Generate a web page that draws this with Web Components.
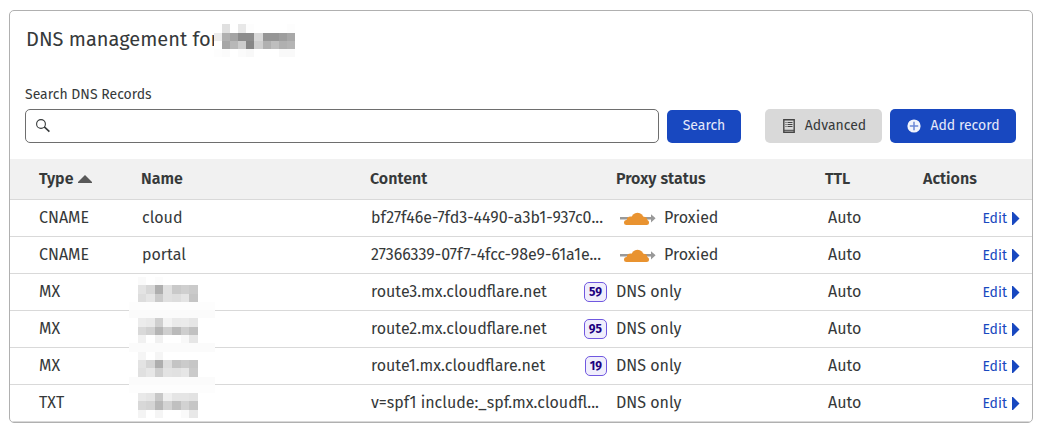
<!DOCTYPE html>
<html lang="en">
<head>
<meta charset="utf-8">
<meta name="viewport" content="width=device-width, initial-scale=1">
<title>DNS management</title>
<style>
  body {
    margin: 0;
    padding: 10px 14px 16px 9px;
    background: #fff;
    color: #36393a;
    font: 16px/20px "Fira Sans", Roboto, "Noto Sans", sans-serif;
  }
</style>
</head>
<body>
<dns-panel>
  <span slot="title">DNS management for</span>
  <pixel-mosaic slot="domain" kind="title"></pixel-mosaic>
  <dns-toolbar slot="toolbar"></dns-toolbar>
  <dns-table></dns-table>
</dns-panel>

<script>
class DnsPanel extends HTMLElement {
  constructor() {
    super();
    this.attachShadow({ mode: 'open' });
  }

  static get styles() {
    return /* css */ `
      :host {
        display: block;
        border: 1px solid #b0b0b0;
        border-radius: 5px;
        overflow: hidden;
      }

      header {
        display: flex;
        align-items: flex-start;
        height: 33px;
        padding: 13px 16px 0;
      }

      h1 {
        margin: 0;
        width: 188px;
        font-size: 20px;
        line-height: 30px;
        font-weight: 400;
        white-space: nowrap;
      }
    `;
  }

  connectedCallback() {
    this.shadowRoot.innerHTML = /* html */ `
    <style>${DnsPanel.styles}</style>
    <header>
      <h1><slot name="title"></slot></h1>
      <slot name="domain"></slot>
    </header>
    <slot name="toolbar"></slot>
    <slot></slot>`;
  }
}

// Grey blocks that stand in for the hidden names
class PixelMosaic extends HTMLElement {
  constructor() {
    super();
    this.attachShadow({ mode: 'open' });
  }

  static get kinds() {
    return {
      title: {
        width: 81,
        height: 33,
        xs: [0, 8, 16, 24, 32, 40, 49, 57, 65, 73, 81],
        bands: [],
        rows: [
          [0, 9, 'ff e0 ff e8 fd ff ff ff ff fd'],
          [9, 8, 'ec b0 a4 8c 8c d8 96 96 9e a8'],
          [17, 8, 'ff a6 b8 cc 86 ce b0 be b0 b4'],
          [25, 8, 'fd fb ff fb f8 ff ff ff f9 f9']
        ]
      },
      names: {
        width: 86,
        height: 144,
        xs: [9, 17, 26, 34, 43, 52, 60, 69],
        bands: [[28, 8, 'fd'], [36, 8, 'fb'], [69, 9, 'fb'], [103, 8, 'fb'], [111, 8, 'fd']],
        rows: [
          [3, 8, 'fa ff fc ff ff ff ff'],
          [11, 9, 'e3 d7 ae e0 c9 cf ca'],
          [20, 8, 'dd e5 ca e0 dd e4 c5'],
          [44, 9, 'ec e9 cf f3 ea eb e6'],
          [53, 8, 'd9 d1 b5 cf ba ce c1'],
          [61, 8, 'f1 ff f1 ff ff f8 e6'],
          [78, 8, 'f5 ff f5 ff ff ff ff'],
          [86, 8, 'e3 d5 ae dd c4 cb c6'],
          [94, 9, 'e0 e7 cf e3 e1 e6 ca'],
          [119, 8, 'e9 e5 c8 ef e5 e5 e2'],
          [127, 9, 'd8 d4 b8 d3 c0 d2 c6'],
          [136, 8, 'f4 ff f5 ff ff fa e8']
        ]
      }
    };
  }

  connectedCallback() {
    const { width, height, xs, bands, rows } = PixelMosaic.kinds[this.getAttribute('kind')];
    const rect = (x, y, w, h, g) =>
      `<rect x="${x}" y="${y}" width="${w}" height="${h}" fill="#${g}${g}${g}"/>`;
    const blocks = rows.map(([y, h, greys]) =>
      greys.split(' ').map((g, i) => rect(xs[i], y, xs[i + 1] - xs[i], h, g)).join('')
    );

    this.shadowRoot.innerHTML = /* html */ `
    <style>
      :host { display: block; position: relative; }
      svg { display: block; }
    </style>
    <svg width="${width}" height="${height}" shape-rendering="crispEdges" aria-hidden="true">
      ${bands.map(([y, h, g]) => rect(0, y, width, h, g)).join('')}
      ${blocks.join('')}
    </svg>`;
  }
}

class UiButton extends HTMLElement {
  constructor() {
    super();
    this.attachShadow({ mode: 'open' });
  }

  static get styles() {
    return /* css */ `
      :host {
        display: block;
      }

      button {
        display: flex;
        align-items: center;
        justify-content: center;
        gap: 8px;
        width: 100%;
        height: 34px;
        padding: 0 15px;
        border: 0;
        border-radius: 5px;
        background: #1848c0;
        color: #e6eafa;
        font: inherit;
        font-size: 14px;
        white-space: nowrap;
        cursor: pointer;
      }

      :host([variant="grey"]) button {
        background: #d9d9d9;
        color: #36393a;
      }

      :host(.search) button {
        height: 33px;
        padding-bottom: 2px;
      }
    `;
  }

  connectedCallback() {
    this.shadowRoot.innerHTML = /* html */ `
    <style>${UiButton.styles}</style>
    <button type="button"><slot name="icon"></slot><slot></slot></button>`;
  }
}

class DnsToolbar extends HTMLElement {
  constructor() {
    super();
    this.attachShadow({ mode: 'open' });
  }

  static get styles() {
    return /* css */ `
      :host {
        display: block;
        padding: 28px 16px 16px 15px;
      }

      label {
        display: block;
        margin-bottom: 4px;
        font-size: 14px;
        line-height: 20px;
      }

      .bar {
        display: flex;
        align-items: flex-end;
        gap: 8px;
      }

      .field {
        display: flex;
        flex: 1;
        align-items: center;
        gap: 8px;
        box-sizing: border-box;
        height: 34px;
        padding: 0 9px;
        border: 1px solid #6e6e6e;
        border-radius: 5px;
      }

      input {
        flex: 1;
        min-width: 0;
        border: 0;
        outline: 0;
        background: none;
        color: inherit;
        font: inherit;
      }

      svg {
        display: block;
        flex: none;
      }

      .search { width: 74px; }
      .advanced { width: 117px; margin-left: 16px; }
      .add { width: 126px; }
    `;
  }

  connectedCallback() {
    this.shadowRoot.innerHTML = /* html */ `
    <style>${DnsToolbar.styles}</style>
    <label for="search">Search DNS Records</label>
    <div class="bar">
      <div class="field">
        <svg width="16" height="16" viewBox="0 0 16 16" fill="none" stroke="#36393a" aria-hidden="true">
          <circle cx="6" cy="6" r="4.4" stroke-width="1.1"/>
          <path d="M9.3 8.8 14.4 13.6" stroke-width="1.6"/>
        </svg>
        <input id="search" type="text">
      </div>
      <ui-button class="search">Search</ui-button>
      <ui-button class="advanced" variant="grey">
        <svg slot="icon" width="16" height="16" viewBox="0 0 16 16" fill="none" stroke="#444" aria-hidden="true">
          <path d="M2.8 1.8h10.4v12.4H2.8z" stroke-width="1.4"/>
          <path d="M4.5 4.5h1M6.5 4.5h5M4.5 6.5h1M6.5 6.5h5M4.5 8.5h1M6.5 8.5h5M3 12.3h10"/>
        </svg>
        Advanced
      </ui-button>
      <ui-button class="add">
        <svg slot="icon" width="16" height="16" viewBox="0 0 16 16" aria-hidden="true">
          <circle cx="8" cy="8" r="6.6" fill="#f2f4fc"/>
          <path d="M8 3.8v8.4M3.8 8h8.4" stroke="#6c88d6" stroke-width="1.5"/>
        </svg>
        Add record
      </ui-button>
    </div>`;
  }
}

class DnsTable extends HTMLElement {
  constructor() {
    super();
    this.attachShadow({ mode: 'open' });
    this.records = [
      { type: 'CNAME', name: 'cloud', content: 'bf27f46e-7fd3-4490-a3b1-937c0...', proxied: true },
      { type: 'CNAME', name: 'portal', content: '27366339-07f7-4fcc-98e9-61a1e...', proxied: true },
      { type: 'MX', mosaic: true, content: 'route3.mx.cloudflare.net', priority: 59 },
      { type: 'MX', content: 'route2.mx.cloudflare.net', priority: 95 },
      { type: 'MX', content: 'route1.mx.cloudflare.net', priority: 19 },
      { type: 'TXT', content: 'v=spf1 include:_spf.mx.cloudfl...' }
    ];
  }

  static get styles() {
    return /* css */ `
      :host {
        display: block;
      }

      table {
        width: 100%;
        table-layout: fixed;
        border-collapse: separate;
        border-spacing: 0;
      }

      th, td {
        box-sizing: border-box;
        height: 37px;
        padding: 0 0 0 10px;
        border-bottom: 1px solid #d9d9d9;
        text-align: left;
        vertical-align: middle;
        white-space: nowrap;
      }

      th {
        height: 41px;
        background: #f1f1f1;
        font-weight: 600;
      }

      td { padding-left: 11px; }

      .type { width: 121px; padding-left: 29px; }
      .content { width: 247px; }
      .proxy { width: 208px; padding-left: 9px; }
      .ttl { width: 98px; }
      td.ttl { padding-left: 13px; }
      .actions { width: 119px; }
      td.actions { padding-right: 12px; }

      .line {
        display: flex;
        align-items: center;
        justify-content: space-between;
      }

      .sort, .status {
        display: flex;
        align-items: center;
        gap: 5px;
      }

      .status { gap: 8px; padding-left: 4px; }

      .name { position: relative; }

      pixel-mosaic {
        position: absolute;
        top: 0;
        left: -2px;
        z-index: 1;
      }

      .priority {
        box-sizing: border-box;
        height: 20px;
        padding: 0 4px;
        border: 1px solid #7058e0;
        border-radius: 5px;
        background: #f0eefc;
        color: #200080;
        font-size: 12px;
        line-height: 18px;
        font-weight: 700;
      }

      a {
        display: flex;
        align-items: center;
        justify-content: flex-end;
        gap: 5px;
        padding-top: 1px;
        color: #1848c0;
        font-size: 14px;
        text-decoration: none;
      }

      svg {
        display: block;
        flex: none;
      }
    `;
  }

  get cloud() {
    return /* html */ `
      <svg width="36" height="14" viewBox="0 0 36 14" aria-hidden="true">
        <path d="M0 6h8v2.6H0zM25 6h6V3.2l4.6 4.1L31 11.400V8.6h-6z" fill="#999"/>
        <g fill="#e99330">
          <rect x="4" y="9" width="25" height="5" rx="2.500"/>
          <circle cx="10.500" cy="9.300" r="3.700"/>
          <circle cx="17.500" cy="8" r="6.200"/>
          <circle cx="23.500" cy="9.800" r="4"/>
        </g>
      </svg>`;
  }

  row({ type, name = '', mosaic, content, proxied, priority }) {
    return /* html */ `
      <tr>
        <td class="type">${type}</td>
        <td class="name">${mosaic ? '<pixel-mosaic kind="names"></pixel-mosaic>' : name}</td>
        <td class="content">
          <div class="line">
            <span>${content}</span>
            ${priority ? `<span class="priority">${priority}</span>` : ''}
          </div>
        </td>
        <td class="proxy">
          ${proxied ? `<div class="status">${this.cloud}<span>Proxied</span></div>` : 'DNS only'}
        </td>
        <td class="ttl">Auto</td>
        <td class="actions">
          <a href="#edit">Edit
            <svg width="8" height="13" viewBox="0 0 8 13" fill="#1848c0" aria-hidden="true">
              <path d="M0 0h1l6.500 6.500L1 13H0z"/>
            </svg>
          </a>
        </td>
      </tr>`;
  }

  connectedCallback() {
    this.shadowRoot.innerHTML = /* html */ `
    <style>${DnsTable.styles}</style>
    <table>
      <thead>
        <tr>
          <th class="type" aria-sort="ascending">
            <div class="sort">Type
              <svg width="14" height="8" viewBox="0 0 14 8" fill="#595959" aria-hidden="true">
                <path d="M7 0l7 7v1H0V7z"/>
              </svg>
            </div>
          </th>
          <th class="name">Name</th>
          <th class="content">Content</th>
          <th class="proxy">Proxy status</th>
          <th class="ttl">TTL</th>
          <th class="actions">Actions</th>
        </tr>
      </thead>
      <tbody>${this.records.map(record => this.row(record)).join('')}</tbody>
    </table>`;
  }
}

customElements.define('pixel-mosaic', PixelMosaic);
customElements.define('ui-button', UiButton);
customElements.define('dns-toolbar', DnsToolbar);
customElements.define('dns-table', DnsTable);
customElements.define('dns-panel', DnsPanel);
</script>
</body>
</html>
